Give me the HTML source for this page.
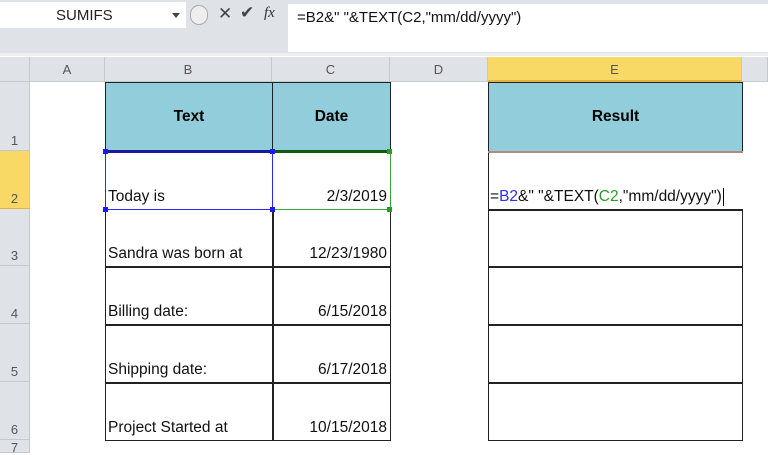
<!DOCTYPE html>
<html><head><style>
*{margin:0;padding:0;box-sizing:border-box}
body{width:768px;height:453px;overflow:hidden;background:#fff;font-family:"Liberation Sans",sans-serif;position:relative}
.a{position:absolute}
.hd{background:#dfe3e8;color:#555;font-size:13px;text-align:center;border-right:1px solid #c5c9cf;border-bottom:1px solid #c5c9cf}
.rh{background:#dfe3e8;color:#555;font-size:13px;left:0;width:30px;border-bottom:1px solid #c5c9cf;border-right:1px solid #c5c9cf;display:flex;align-items:flex-end;justify-content:center;padding-bottom:2px}
.c{font-size:15.5px;color:#111;display:flex;align-items:flex-end;padding:0 3px 3px}
.blue{background:#92cddc;font-weight:bold;font-size:15.5px;display:flex;align-items:center;justify-content:center;border:1.5px solid #222}
</style></head><body>
<div class="a" style="left:0;top:0;width:768px;height:56px;background:#dfe3e8"></div>
<div class="a" style="left:0;top:2px;width:186px;height:26px;background:#fff;font-size:15px;color:#222;padding:5px 0 0 56px">SUMIFS</div>
<div class="a" style="left:172px;top:13px;width:0;height:0;border-left:4px solid transparent;border-right:4px solid transparent;border-top:5px solid #444"></div>
<div class="a" style="left:190px;top:5px;width:18px;height:20px;border:1px solid #aaa;border-radius:10px;background:#eee"></div>
<div class="a" style="left:218px;top:4px;font-size:17px;color:#444">✕</div>
<div class="a" style="left:240px;top:3px;font-size:17px;color:#444">✔</div>
<div class="a" style="left:264px;top:5px;font-size:15px;color:#333;font-family:'Liberation Serif',serif;font-style:italic">fx</div>
<div class="a" style="left:288px;top:4px;width:480px;height:48px;background:#fff;font-size:15px;color:#111;padding:5px 0 0 9px">=B2&amp;" "&amp;TEXT(C2,"mm/dd/yyyy")</div>
<div class="a" style="left:0;top:53px;width:768px;height:3px;background:#eceef1"></div>
<div class="a hd" style="left:0;top:57px;width:30px;height:25px"></div>
<div class="a hd" style="left:30px;top:57px;width:75px;height:25px;padding-top:5px">A</div>
<div class="a hd" style="left:105px;top:57px;width:167px;height:25px;padding-top:5px">B</div>
<div class="a hd" style="left:272px;top:57px;width:118px;height:25px;padding-top:5px">C</div>
<div class="a hd" style="left:390px;top:57px;width:98px;height:25px;padding-top:5px">D</div>
<div class="a hd" style="left:488px;top:57px;width:254px;height:25px;padding-top:5px;background:#f9d966;border-bottom:2px solid #e2b341">E</div>
<div class="a hd" style="left:742px;top:57px;width:26px;height:25px"></div>
<div class="a rh" style="top:82px;height:69px">1</div>
<div class="a rh" style="top:151px;height:58px;background:#f9d966;border-bottom:1px solid #e2b341">2</div>
<div class="a rh" style="top:209px;height:57px">3</div>
<div class="a rh" style="top:266px;height:58px">4</div>
<div class="a rh" style="top:324px;height:58px">5</div>
<div class="a rh" style="top:382px;height:58px">6</div>
<div class="a rh" style="top:440px;height:13px;align-items:flex-start">7</div>
<div class="a blue" style="left:105px;top:82px;width:168px;height:70px">Text</div>
<div class="a blue" style="left:272px;top:82px;width:119px;height:70px">Date</div>
<div class="a blue" style="left:488px;top:82px;width:255px;height:70px">Result</div>
<div class="a" style="left:105px;top:209px;width:286px;height:232px;border:1.5px solid #222;border-top:none"></div>
<div class="a" style="left:272px;top:209px;width:1.5px;height:232px;background:#222"></div>
<div class="a" style="left:105px;top:266px;width:286px;height:1.5px;background:#222"></div>
<div class="a" style="left:105px;top:324px;width:286px;height:1.5px;background:#222"></div>
<div class="a" style="left:105px;top:382px;width:286px;height:1.5px;background:#222"></div>
<div class="a" style="left:105px;top:150px;width:168px;height:60px;border:1.5px solid #2a2af5;border-top:3px solid #1a1aa0"></div>
<div class="a" style="left:272px;top:150px;width:119px;height:60px;border:1.5px solid #3aa33a;border-top:3px solid #0f5a0f;border-left:none"></div>
<div class="a" style="left:103px;top:149px;width:5px;height:5px;background:#1a1af5"></div>
<div class="a" style="left:270px;top:149px;width:5px;height:5px;background:#1a1af5"></div>
<div class="a" style="left:103px;top:207px;width:5px;height:5px;background:#1a1af5"></div>
<div class="a" style="left:270px;top:207px;width:5px;height:5px;background:#1a1af5"></div>
<div class="a" style="left:387px;top:149px;width:5px;height:5px;background:#2a9a2a"></div>
<div class="a" style="left:387px;top:207px;width:5px;height:5px;background:#2a9a2a"></div>
<div class="a c" style="left:105px;top:150px;width:167px;height:59px">Today is</div>
<div class="a c" style="left:105px;top:209px;width:167px;height:57px">Sandra was born at</div>
<div class="a c" style="left:105px;top:266px;width:167px;height:58px">Billing date:</div>
<div class="a c" style="left:105px;top:324px;width:167px;height:58px">Shipping date:</div>
<div class="a c" style="left:105px;top:382px;width:167px;height:58px">Project Started at</div>
<div class="a c" style="left:272px;top:150px;width:118px;height:59px;justify-content:flex-end">2/3/2019</div>
<div class="a c" style="left:272px;top:209px;width:118px;height:57px;justify-content:flex-end">12/23/1980</div>
<div class="a c" style="left:272px;top:266px;width:118px;height:58px;justify-content:flex-end">6/15/2018</div>
<div class="a c" style="left:272px;top:324px;width:118px;height:58px;justify-content:flex-end">6/17/2018</div>
<div class="a c" style="left:272px;top:382px;width:118px;height:58px;justify-content:flex-end">10/15/2018</div>
<div class="a" style="left:488px;top:150px;width:255px;height:291px;border:1.5px solid #222;border-top:none"></div>
<div class="a" style="left:488px;top:151px;width:255px;height:1.5px;background:#b08a80"></div>
<div class="a" style="left:488px;top:266px;width:255px;height:1.5px;background:#222"></div>
<div class="a" style="left:488px;top:324px;width:255px;height:1.5px;background:#222"></div>
<div class="a" style="left:488px;top:382px;width:255px;height:1.5px;background:#222"></div>
<div class="a" style="left:488px;top:209px;width:255px;height:1.5px;background:#222"></div>
<div class="a" style="left:490px;top:153px;width:262px;height:56px;background:#fff"></div>
<div class="a c" style="left:488px;top:152px;width:270px;height:57px;padding-left:2px;white-space:nowrap">=<span style="color:#3030f0">B2</span>&amp;" "&amp;TEXT(<span style="color:#2a9a2a">C2</span>,"mm/dd/yyyy")<span style="border-left:1.5px solid #000;height:18px;margin-left:1px"></span></div>
</body></html>
